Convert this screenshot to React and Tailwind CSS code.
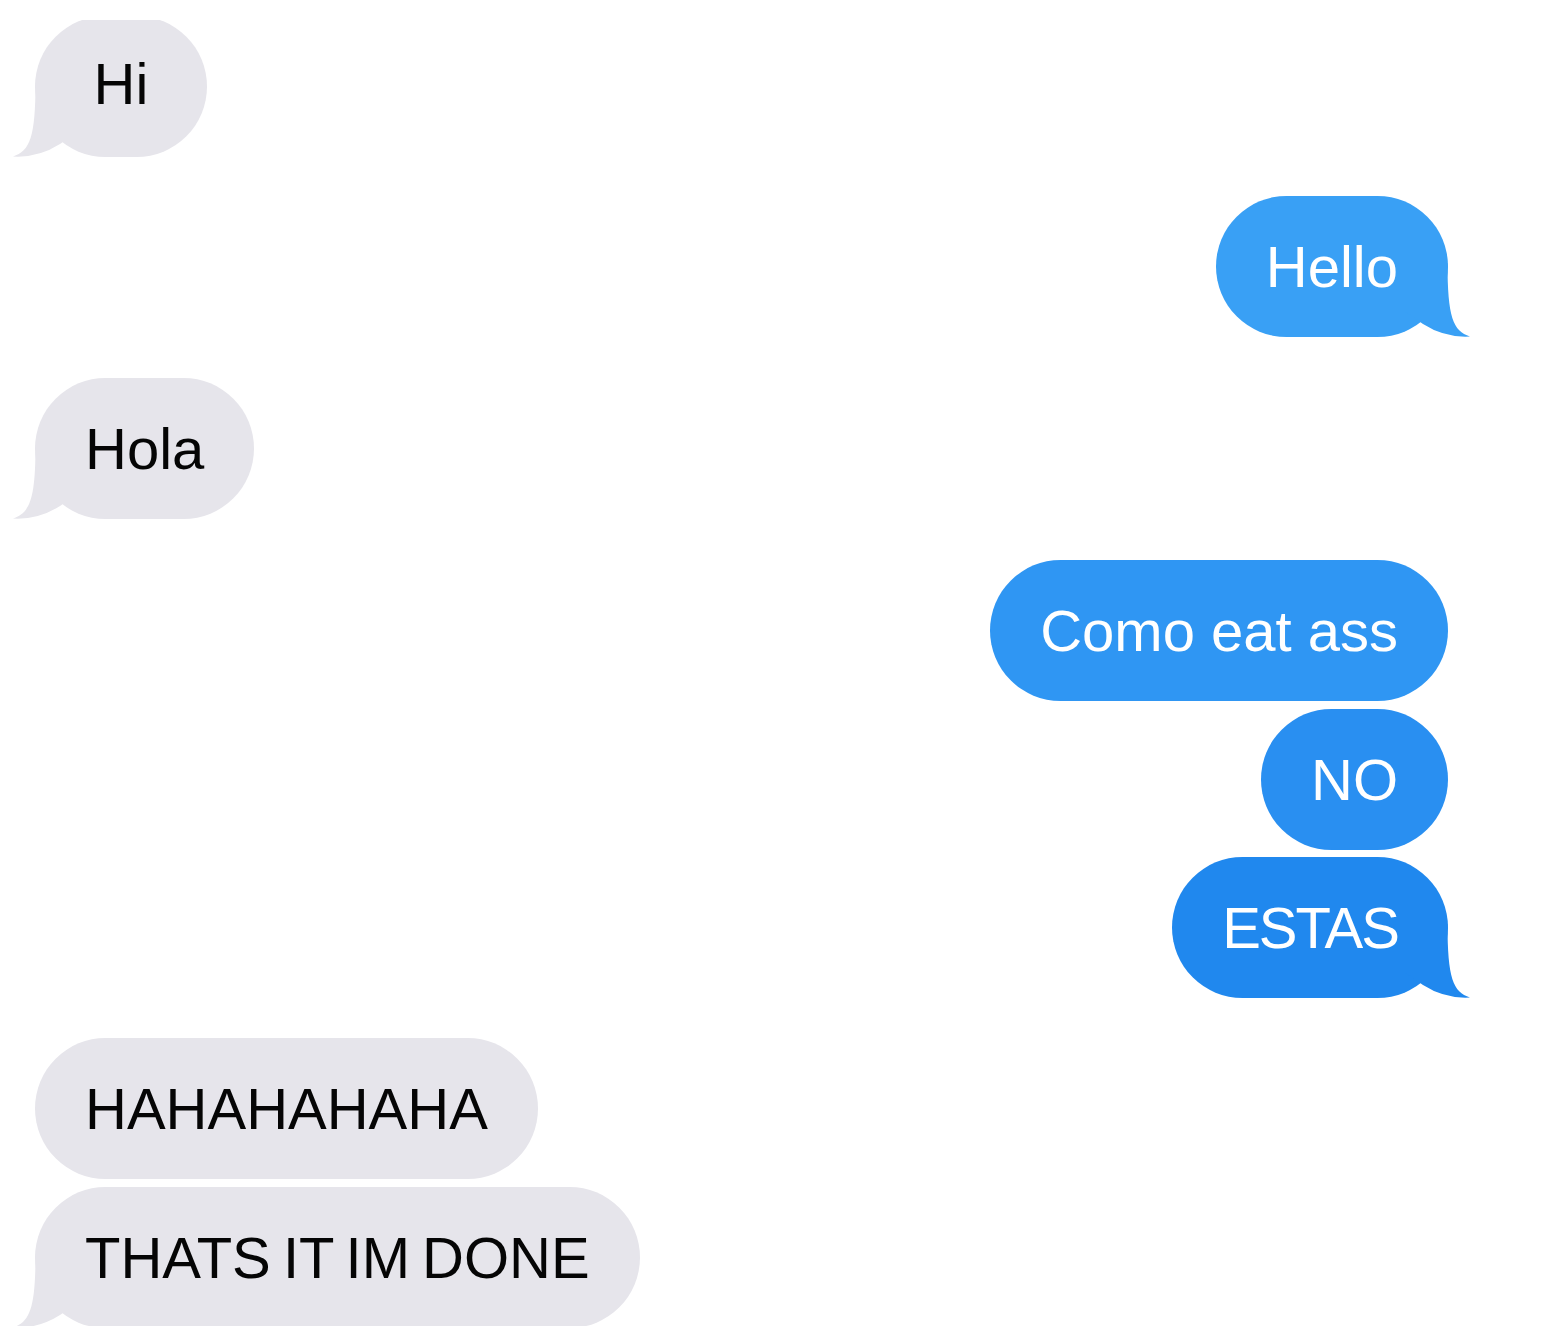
import React from 'react';

// 吹き出しのしっぽ（左下向き）。右側は scale-x-[-1] で反転して使う
function Tail({ fill, side }) {
  const pos = side === 'left' ? 'left-[-23px]' : 'right-[-23px] scale-x-[-1]';
  return (
    <svg
      className={`absolute bottom-0 ${pos}`}
      width="70"
      height="80"
      viewBox="0 0 70 80"
      aria-hidden="true"
    >
      <path d="M23.5 6 C23.5 60 18 74 1 79.5 Q26 81 48 67 L68 53 L68 6 Z" fill={fill} />
    </svg>
  );
}

function Bubble({ text, side, color, tail, className = '', textClass = '' }) {
  const isLeft = side === 'left';
  return (
    <div className={`flex ${isLeft ? 'justify-start pl-[35px]' : 'justify-end pr-[100px]'} ${className}`}>
      <div
        className={`relative h-[141px] rounded-[71px] px-[50px] flex items-center justify-center ${
          isLeft ? 'text-[#050505]' : 'text-white'
        }`}
        style={{ backgroundColor: color }}
      >
        {tail && <Tail fill={color} side={side} />}
        <span className={`relative text-[58px] leading-none whitespace-nowrap ${textClass}`}>{text}</span>
      </div>
    </div>
  );
}

const GRAY = '#e6e5eb';

export default function App() {
  return (
    <div
      className="w-[1548px] h-[1340px] bg-white overflow-hidden"
      style={{ fontFamily: '"Liberation Sans", Arial, sans-serif' }}
    >
      <div className="mt-[20px] h-[1306px] overflow-hidden flex flex-col">
        <Bubble
          text="Hi"
          side="left"
          color={GRAY}
          tail
          className="-mt-[4px] [&>div]:min-w-[172px]"
          textClass="-top-[3px]"
        />
        <Bubble text="Hello" side="right" color="#39a0f5" tail className="mt-[39px]" />
        <Bubble text="Hola" side="left" color={GRAY} tail className="mt-[41px]" />
        <Bubble text="Como eat ass" side="right" color="#2f96f3" className="mt-[41px]" />
        <Bubble text="NO" side="right" color="#298ff1" className="mt-[8px]" />
        <Bubble
          text="ESTAS"
          side="right"
          color="#2088ee"
          tail
          className="mt-[7px]"
          textClass="tracking-[-2px]"
        />
        <Bubble text="HAHAHAHAHA" side="left" color={GRAY} className="mt-[40px]" />
        <Bubble
          text="THATS IT IM DONE"
          side="left"
          color={GRAY}
          tail
          className="mt-[8px]"
          textClass="[word-spacing:-4px]"
        />
      </div>
    </div>
  );
}
